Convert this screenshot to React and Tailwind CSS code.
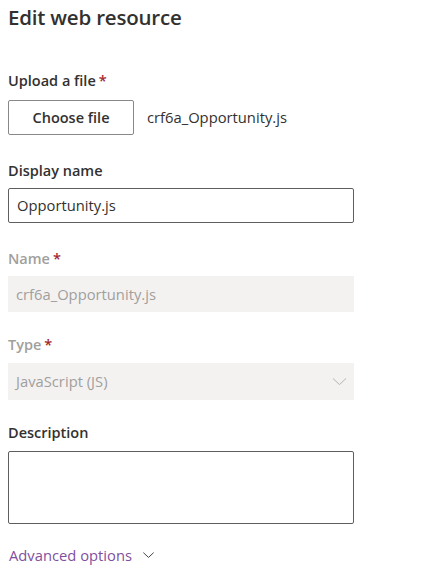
import React from "react";

const font = { fontFamily: '"Open Sans", "Noto Sans", sans-serif' };

function Req() {
  return <span className="text-[#a4262c] ml-[3px]">*</span>;
}

function Chevron({ className, color, width = 1.1 }) {
  return (
    <svg className={className} viewBox="0 0 16 8" fill="none">
      <path d="M0.5 0.5 L8 7.5 L15.5 0.5" stroke={color} strokeWidth={width} />
    </svg>
  );
}

export default function App() {
  return (
    <div className="w-[424px] h-[574px] bg-white text-[#323130] pl-2 overflow-hidden" style={font}>
      <h1 className="pt-[3px] text-[20.5px] leading-[28px] font-semibold tracking-[-0.2px]">Edit web resource</h1>

      <div className="mt-[40px] text-[14.5px] leading-5 font-semibold">
        Upload a file<Req />
      </div>
      <div className="mt-[9px] flex items-center">
        <button className="w-[126px] h-[35px] border border-[#8a8886] rounded-[2px] text-[14.5px] font-semibold text-[#323130]">
          Choose file
        </button>
        <span className="ml-[13px] text-[14.75px]">crf6a_Opportunity.js</span>
      </div>

      <div className="mt-[26px] text-[14.5px] leading-5 font-semibold">Display name</div>
      <div className="mt-[7px] w-[346px] h-[35px] border border-[#605e5c] rounded-[2px] flex items-center px-2 text-[14.75px]">
        Opportunity.js
      </div>

      <div className="mt-[26px] text-[14.5px] leading-5 font-semibold text-[#a19f9d]">
        Name<Req />
      </div>
      <div className="mt-[7px] w-[346px] h-[36px] bg-[#f3f2f1] flex items-center px-2 text-[14.75px] text-[#a19f9d]">
        crf6a_Opportunity.js
      </div>

      <div className="mt-[23px] text-[14.5px] leading-5 font-semibold text-[#a19f9d]">
        Type<Req />
      </div>
      <div className="mt-[8px] w-[346px] h-[37px] bg-[#f3f2f1] flex items-center justify-between pl-2 pr-[7px] text-[14.75px] text-[#a19f9d]">
        <span>JavaScript (JS)</span>
        <Chevron className="w-[15px] h-[7px]" color="#b3b0ad" />
      </div>

      <div className="mt-[23px] text-[14.5px] leading-5 font-semibold">Description</div>
      <div className="mt-[8px] w-[346px] h-[73px] border border-[#605e5c] rounded-[2px]"></div>

      <div className="mt-[21px] flex items-center text-[14.75px] text-[#7f4f9e] leading-5">
        <span className="ml-px">Advanced options</span>
        <Chevron className="ml-[11px] w-[11px] h-[6px]" color="#323130" width={1.3} />
      </div>
    </div>
  );
}
